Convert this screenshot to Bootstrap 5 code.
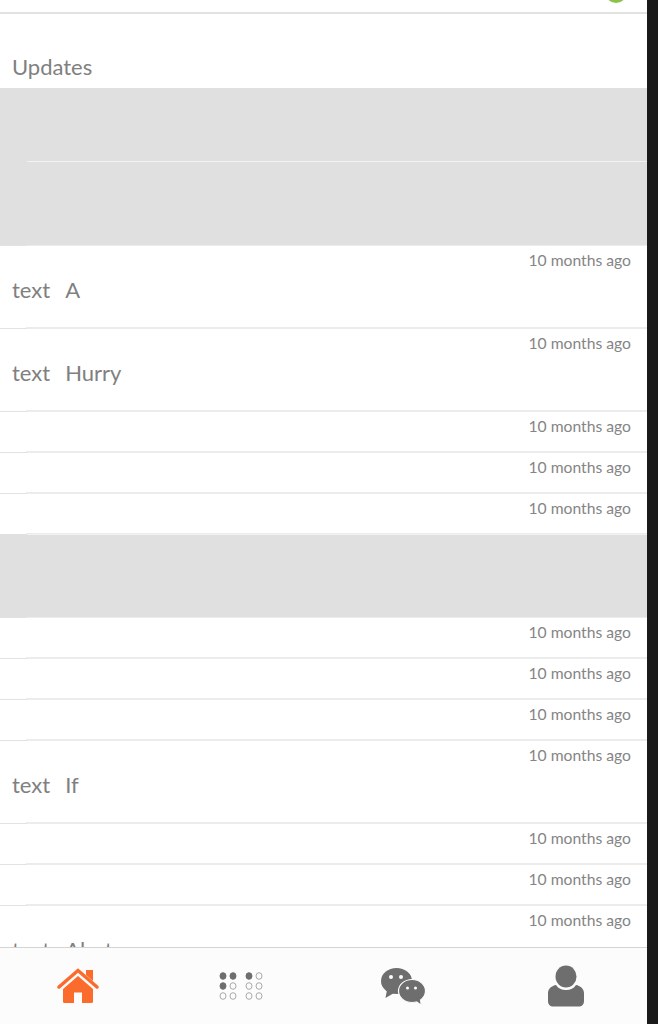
<!DOCTYPE html>
<html lang="en">
  <head>
    <meta charset="UTF-8" />
    <meta name="viewport" content="width=device-width, initial-scale=1.0" />
    <title>Updates</title>
    <link
      href="https://cdn.jsdelivr.net/npm/bootstrap@5.3.0/dist/css/bootstrap.min.css"
      rel="stylesheet"
    />
    <style>
      body {
        font-family: Lato, "Liberation Sans", sans-serif;
        background-color: #1a1a1a;
        color: #808080;
        height: 100vh;
        overflow: hidden;
      }
      .app-shell {
        width: 647px;
        height: 1024px;
        background-color: #fff;
      }
      .feed-scroll {
        flex: 1;
        min-height: 0;
        overflow: hidden;
        position: relative;
      }
      .top-strip {
        height: 14px;
        border-bottom: 2px solid #e2e2e2;
      }
      .status-dot {
        position: absolute;
        top: -19px;
        left: 605px;
        width: 22px;
        height: 22px;
        border-radius: 50%;
        background-color: #8bc34a;
      }
      .feed-title {
        height: 74px;
        padding: 0 12px 8px;
        font-size: 22px;
        line-height: 26px;
      }
      /* separators are two-tone: darker under the first 27px */
      .feed-row {
        height: 41px;
        border-bottom: 1px solid;
        border-image: linear-gradient(to right, transparent 27px, #ececec 27px) 1;
        background:
          linear-gradient(#e2e2e2, #e2e2e2) left top / 27px 1px no-repeat,
          linear-gradient(#ececec, #ececec) left top / 100% 1px no-repeat;
      }
      .feed-row.has-text {
        height: 83px;
      }
      .feed-row.grey-row {
        border-image: none;
        border-bottom-color: #e0e0e0;
        background:
          linear-gradient(#e0e0e0, #e0e0e0) left top / 27px 1px no-repeat,
          linear-gradient(#f2f2f2, #f2f2f2) left top / 100% 1px no-repeat,
          linear-gradient(#e0e0e0, #e0e0e0) left 1px / 100% 100% no-repeat;
      }
      .grey-block {
        background-color: #e0e0e0;
      }
      .grey-tall {
        height: 74px;
        margin-left: 27px;
      }
      .feed-row.grey-tall {
        background: none;
        border-image: none;
        border-bottom-color: #f2f2f2;
      }
      .feed-row.grey-plain {
        background: none;
        border-image: none;
        border-bottom-color: #e0e0e0;
      }
      .time-ago {
        padding: 5px 16px 0 0;
        font-size: 15.7px;
        line-height: 20px;
        color: #858585;
      }
      .row-text {
        padding: 6px 12px 0;
        font-size: 22px;
        line-height: 28px;
      }
      .row-text span {
        margin-right: 15px;
      }
      .tab-bar {
        height: 77px;
        background-color: #fcfcfc;
        border-top: 1px solid #d4d4d4;
      }
      .tab-row {
        width: 650px;
        margin-left: -3px;
      }
      .tab-slot {
        height: 76px;
      }
    </style>
  </head>
  <body>
    <div class="app-shell d-flex flex-column">
      <div class="feed-scroll">
        <div class="status-dot"></div>
        <div class="top-strip"></div>
        <div class="feed-title d-flex align-items-end">Updates</div>

        <div class="grey-block">
          <div class="grey-tall feed-row"></div>
          <div class="feed-row has-text grey-plain"></div>
        </div>

        <div class="feed-row has-text">
          <div class="time-ago text-end">10 months ago</div>
          <div class="row-text"><span>text</span>A</div>
        </div>
        <div class="feed-row has-text">
          <div class="time-ago text-end">10 months ago</div>
          <div class="row-text"><span>text</span>Hurry</div>
        </div>
        <div class="feed-row"><div class="time-ago text-end">10 months ago</div></div>
        <div class="feed-row"><div class="time-ago text-end">10 months ago</div></div>
        <div class="feed-row"><div class="time-ago text-end">10 months ago</div></div>
        <div class="feed-row has-text grey-row"></div>
        <div class="feed-row"><div class="time-ago text-end">10 months ago</div></div>
        <div class="feed-row"><div class="time-ago text-end">10 months ago</div></div>
        <div class="feed-row"><div class="time-ago text-end">10 months ago</div></div>
        <div class="feed-row has-text">
          <div class="time-ago text-end">10 months ago</div>
          <div class="row-text"><span>text</span>If</div>
        </div>
        <div class="feed-row"><div class="time-ago text-end">10 months ago</div></div>
        <div class="feed-row"><div class="time-ago text-end">10 months ago</div></div>
        <div class="feed-row has-text">
          <div class="time-ago text-end">10 months ago</div>
          <div class="row-text"><span>text</span>Alert</div>
        </div>
      </div>

      <nav class="tab-bar flex-shrink-0">
        <div class="row g-0 tab-row">
          <div class="col-3 tab-slot d-flex align-items-center justify-content-center">
            <svg width="42" height="36" viewBox="0 0 42 36">
              <path fill="#fb6c2c" d="M6 21 21 8l15 13v12.500a1.500 1.500 0 0 1-1.500 1.500H25V24.500h-8V35H7.500A1.500 1.500 0 0 1 6 33.500z" />
              <path fill="none" stroke="#fb6c2c" stroke-width="3.500" stroke-linecap="round" d="M2 19 21 2.500 40 19" />
              <path fill="#fb6c2c" d="M29 2h7v11l-7-6z" />
            </svg>
          </div>
          <div class="col-3 tab-slot d-flex align-items-center justify-content-center">
            <svg width="46" height="32" viewBox="0 0 46 32" fill="none" stroke="#aaa" stroke-width="1">
              <g fill="#6e6e6e" stroke="#6e6e6e">
                <ellipse cx="5" cy="6" rx="3" ry="3.300" />
                <ellipse cx="15" cy="6" rx="3" ry="3.300" />
                <ellipse cx="31" cy="6" rx="3" ry="3.300" />
                <ellipse cx="5" cy="16" rx="3" ry="3.300" />
              </g>
              <ellipse cx="41" cy="6" rx="3" ry="3.300" />
              <ellipse cx="15" cy="16" rx="3" ry="3.300" />
              <ellipse cx="31" cy="16" rx="3" ry="3.300" />
              <ellipse cx="41" cy="16" rx="3" ry="3.300" />
              <ellipse cx="5" cy="26" rx="3" ry="3.300" />
              <ellipse cx="15" cy="26" rx="3" ry="3.300" />
              <ellipse cx="31" cy="26" rx="3" ry="3.300" />
              <ellipse cx="41" cy="26" rx="3" ry="3.300" />
            </svg>
          </div>
          <div class="col-3 tab-slot d-flex align-items-center justify-content-center">
            <svg width="48" height="38" viewBox="0 0 48 38">
              <ellipse cx="17.500" cy="14" rx="15.500" ry="13" fill="#6e6e6e" />
              <path fill="#6e6e6e" d="M8 23 6.500 31 15 26z" />
              <ellipse cx="33" cy="24" rx="13.500" ry="11.500" fill="#6e6e6e" stroke="#fcfcfc" stroke-width="1.200" />
              <path fill="#6e6e6e" d="M36 33l5.500 4-1-7z" />
              <g fill="#fcfcfc">
                <circle cx="12" cy="10" r="2" />
                <circle cx="22" cy="10" r="2" />
                <circle cx="28.500" cy="21" r="1.500" />
                <circle cx="36.500" cy="21" r="1.500" />
              </g>
            </svg>
          </div>
          <div class="col-3 tab-slot d-flex align-items-center justify-content-center">
            <svg width="38" height="42" viewBox="0 0 38 42">
              <ellipse cx="19" cy="11.500" rx="10.500" ry="11" fill="#6e6e6e" />
              <path fill="#6e6e6e" d="M9 20c2 3.500 5.500 5 10 5s8-1.500 10-5c4 .6 8 3.600 8 8v8c0 3.500-2 5.500-5.500 5.500h-25C3 41.500 1 39.500 1 36v-8c0-4.400 4-7.400 8-8z" />
            </svg>
          </div>
        </div>
      </nav>
    </div>
    <script src="https://cdn.jsdelivr.net/npm/bootstrap@5.3.0/dist/js/bootstrap.bundle.min.js"></script>
  </body>
</html>
